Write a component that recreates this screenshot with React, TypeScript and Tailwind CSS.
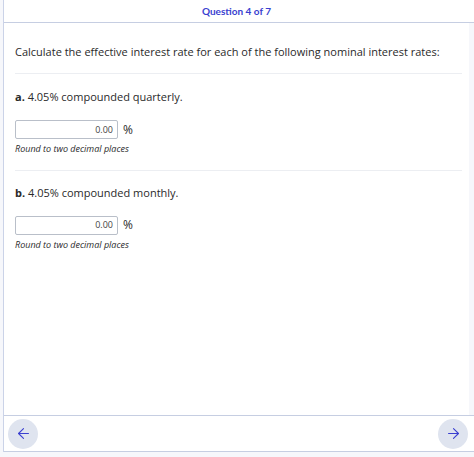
import { ArrowLeft, ArrowRight } from 'lucide-react';

interface PartProps {
  label: string;
  text: string;
  value: string;
}

/**
 * One sub-question: prompt, numeric answer box and rounding hint
 */
function Part({ label, text, value }: PartProps) {
  return (
    <div>
      <p className="text-[11px] text-[#2a2a2a] leading-[16px] whitespace-nowrap">
        <span className="font-bold">{label}</span> {text}
      </p>
      <div className="flex items-center gap-[5px] mt-[15px]">
        <div className="w-[103px] h-[19px] border border-[#b9bfc9] rounded-[2px] flex items-center justify-end pr-[4px] text-[9px] text-[#444]">
          {value}
        </div>
        <span className="text-[12px] text-[#2a2a2a]">%</span>
      </div>
      <p className="mt-[3px] text-[9px] italic text-[#2a2a2a]">Round to two decimal places</p>
    </div>
  );
}

export default function App() {
  return (
    <div
      className="w-[474px] h-[457px] bg-[#f6f7fb] flex flex-col pb-[5px]"
      style={{ fontFamily: '"Open Sans", "Noto Sans", sans-serif' }}
    >
      <div className="ml-[3px] flex-1 flex flex-col bg-white border-l border-[#cbd3e8]">
        {/* Header */}
        <div className="h-[23px] shrink-0 flex items-center justify-center pr-[5px] border-b border-[#c6cee2]">
          <span
            className="text-[10px] font-bold text-[#3a3fd0]"
            style={{ fontFamily: 'Lato, sans-serif' }}
          >
            Question 4 of 7
          </span>
        </div>

        {/* Question body */}
        <div className="flex-1 flex">
          <div className="flex-1 pl-[11px] pr-[7px] pt-[21px]">
            <p className="text-[11px] text-[#2a2a2a] leading-[16px] whitespace-nowrap">
              Calculate the effective interest rate for each of the following nominal interest rates:
            </p>
            <div className="mt-[13px] border-t border-[#eceef2]" />
            <div className="pt-[15px] pb-[14px]">
              <Part label="a." text="4.05% compounded quarterly." value="0.00" />
            </div>
            <div className="border-t border-[#eceef2]" />
            <div className="pt-[14px]">
              <Part label="b." text="4.05% compounded monthly." value="0.00" />
            </div>
          </div>
          <div className="w-[5px] bg-[#f6f7fb]" />
        </div>

        {/* Navigation */}
        <div className="h-[37px] shrink-0 flex items-center justify-between pl-[4px] pr-[6px] border-t border-b border-[#c6cee2]">
          <button className="w-[30px] h-[30px] rounded-full bg-[#dfe4ef] flex items-center justify-center text-[#3a3fd0]">
            <ArrowLeft size={17} strokeWidth={1.5} />
          </button>
          <button className="w-[30px] h-[30px] rounded-full bg-[#dfe4ef] flex items-center justify-center text-[#3a3fd0]">
            <ArrowRight size={17} strokeWidth={1.5} />
          </button>
        </div>
      </div>
    </div>
  );
}
